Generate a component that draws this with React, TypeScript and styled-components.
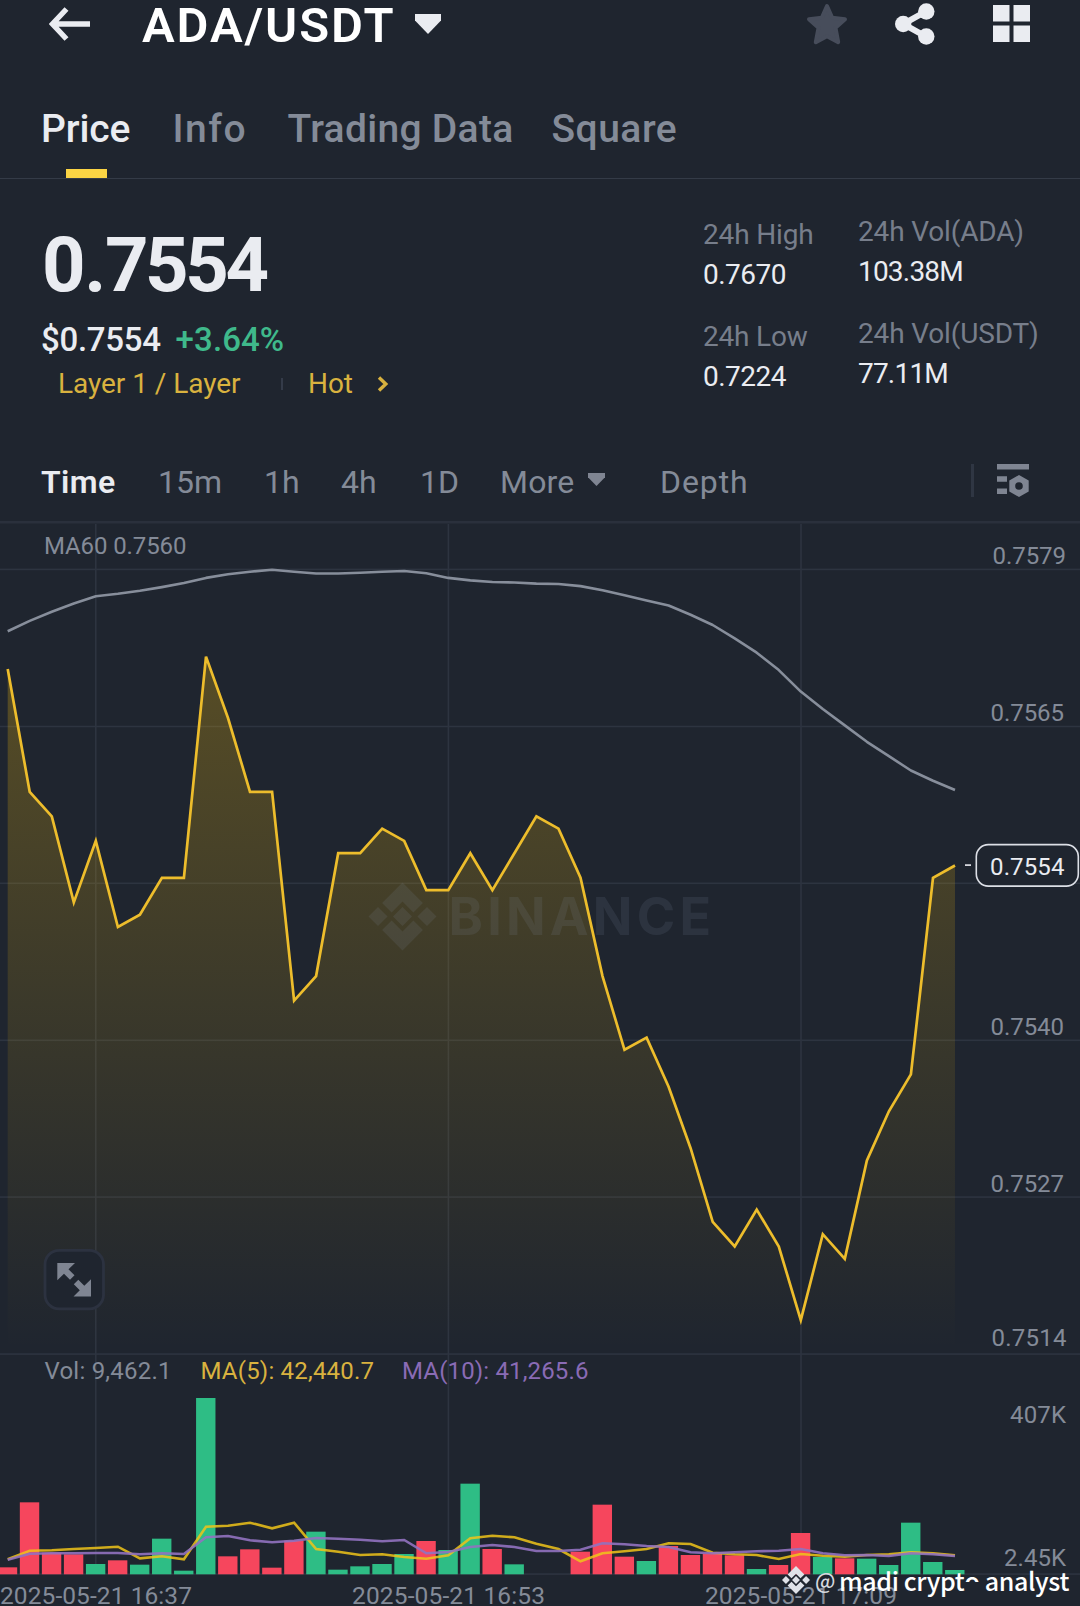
import React from 'react';
import styled, { createGlobalStyle } from 'styled-components';

const c = {
  bg: '#1f252f',
  line: '#2d3440',
  muted: '#848b98',
  dim: '#777e8b',
  light: '#eaecf1',
  yellow: '#d9b23f',
  gold: '#edbd2c',
  green: '#2ebd85',
  red: '#f6465d',
  purple: '#8a6bb5',
};

const GlobalStyle = createGlobalStyle`
  *, *::before, *::after { box-sizing: border-box; }
  body { margin: 0; background: ${c.bg}; }
  svg { display: block; flex: none; }
`;

const Page = styled.main`
  position: relative;
  display: flex;
  flex-direction: column;
  width: 1080px;
  height: 1606px;
  overflow: hidden;
  background: ${c.bg};
  color: ${c.light};
  font-family: Roboto, "Liberation Sans", sans-serif;
  white-space: nowrap;
`;

const Header = styled.header`
  display: flex;
  align-items: center;
  height: 47px;
  padding: 0 50px 0 49px;
`;

const Title = styled.h1`
  width: 273px;
  margin: 5px 0 0 51px;
  font-size: 49px;
  line-height: 52px;
  font-weight: 600;
  letter-spacing: 1.9px;
  color: #fff;
`;

const Actions = styled.div`
  display: flex;
  align-items: center;
  gap: 46.5px;
  margin-left: auto;
`;

const Tabs = styled.nav`
  display: grid;
  grid-template-columns: 131.5px 115px 264px auto;
  height: 132px;
  padding: 57px 0 0 41px;
  border-bottom: 1px solid #343b47;
`;

const Tab = styled.div<{ $active?: boolean; $ls: number }>`
  display: flex;
  flex-direction: column;
  font-size: 39px;
  line-height: 50px;
  font-weight: 500;
  letter-spacing: ${(p) => p.$ls}px;
  color: ${(p) => (p.$active ? c.light : c.muted)};
`;

const TabMark = styled.span`
  width: 41px;
  height: 9px;
  margin: 15px 0 0 25px;
  background: #fbd444;
`;

const Summary = styled.section`
  display: grid;
  grid-template-columns: 662px 155px auto;
  height: 261px;
  padding: 36px 0 0 41px;
`;

const PriceBlock = styled.div`
  display: flex;
  flex-direction: column;
  padding-top: 15px;
`;

const BigPrice = styled.div`
  padding-left: 1px;
  font-size: 76px;
  line-height: 70px;
  font-weight: 700;
  letter-spacing: -3.4px;
`;

const Point = styled.span`
  margin: 0 2px;
`;

const FiatRow = styled.div`
  display: flex;
  gap: 15px;
  margin-top: 22px;
  font-size: 33px;
  line-height: 36px;
  font-weight: 500;
  letter-spacing: -0.3px;
`;

const Change = styled.span`
  color: #3fb98b;
  letter-spacing: 0.1px;
`;

const Tags = styled.div`
  display: flex;
  align-items: center;
  height: 36px;
  margin-top: 8px;
  padding-left: 17px;
  font-size: 28px;
  line-height: 36px;
  letter-spacing: -0.05px;
  color: ${c.yellow};
`;

const TagName = styled.span<{ $w: number }>`
  width: ${(p) => p.$w}px;
`;

const TagDivider = styled.i`
  width: 2px;
  height: 12px;
  margin: 0 25px 0 -1px;
  background: #343b49;
`;

const StatColumn = styled.dl<{ $raise?: boolean }>`
  display: flex;
  flex-direction: column;
  gap: 22px;
  margin: ${(p) => (p.$raise ? '-3px' : '0')} 0 0;
`;

const Stat = styled.div`
  font-size: 28px;
  line-height: 40px;
`;

const StatLabel = styled.dt<{ $ls: number }>`
  color: ${c.dim};
  letter-spacing: ${(p) => p.$ls}px;
`;

const StatValue = styled.dd<{ $ls: number }>`
  margin: 0;
  letter-spacing: ${(p) => p.$ls}px;
`;

const Frames = styled.div`
  display: flex;
  align-items: center;
  height: 81px;
  padding: 2px 51px 0 41px;
  font-size: 32px;
  line-height: 40px;
  color: ${c.dim};
`;

const Frame = styled.span<{ $w: number; $active?: boolean; $ls?: number }>`
  width: ${(p) => p.$w}px;
  letter-spacing: ${(p) => p.$ls ?? 0}px;
  font-weight: ${(p) => (p.$active ? 600 : 400)};
  color: ${(p) => (p.$active ? c.light : c.muted)};
`;

const FrameCaret = styled.span`
  width: 72px;
  padding-bottom: 5px;
`;

const FrameTools = styled.div`
  display: flex;
  align-items: center;
  gap: 23px;
  margin: -3px 0 0 auto;
`;

const ToolDivider = styled.i`
  width: 3px;
  height: 33px;
  background: #2f3643;
`;

const Chart = styled.svg`
  font-family: Roboto, "Liberation Sans", sans-serif;
`;

const Credit = styled.div`
  position: absolute;
  left: 782px;
  top: 1562px;
  display: flex;
  align-items: center;
  height: 36px;
  font-family: "Noto Sans CJK SC", "Noto Sans", sans-serif;
  font-size: 25px;
  line-height: 36px;
  font-weight: 500;
  letter-spacing: -0.35px;
  color: #fff;
`;

const At = styled.span`
  width: 24px;
  margin-left: 5px;
  font-size: 21px;
  color: #d5d8de;
`;

const CutLetter = styled.span`
  display: inline-block;
  clip-path: inset(0 0 16px 0);
`;

const STEP = 22.03;
const X0 = 7.7;
const TOP = 521;
const px = (i: number) => X0 + i * STEP;

const priceTicks = [
  -16, -6, -4, 3, -2, 5, 4, 1, 1, -17, -12, -6, -6, 11, 9, -1, -1, -3, -2, 2, 2, -1, 2, -1, -4, -3, 1, 9,
  15, 14, 18, 23, 29, 31, 28, 31, 37, 30, 32, 24, 20, 17, 1, 0,
];
const priceY = priceTicks.map((k) => 865.5 + 12.29 * k);

const ma60 = [
  616, 606, 597, 589, 582, 579.5, 576.5, 573, 569, 564, 560.5, 558, 556, 558, 559.7, 559.7, 559, 558, 557.3,
  559.5, 564, 566.5, 568, 568.5, 569.6, 570, 572, 576, 581, 586, 591, 600, 610, 623, 637, 654, 675, 692, 708,
  724, 738, 752, 762, 771,
].map((v) => v * 1.0246);

const volumes: Array<[number, 'r' | 'g'] | null> = [
  [682, 'r'], [487, 'r'], [638, 'r'], [643, 'r'], [672, 'g'], [661, 'r'], [674, 'g'], [596, 'g'], [692, 'g'],
  [174, 'g'], [649, 'r'], [628, 'r'], [683, 'r'], [602, 'r'], [575, 'g'], [689, 'g'], [679, 'g'], [672, 'g'],
  [642, 'g'], [603, 'r'], [630, 'g'], [431, 'g'], [627, 'r'], [673, 'g'], null, null, [635, 'r'], [494, 'r'],
  [650, 'r'], [663, 'g'], [618, 'r'], [645, 'r'], [641, 'r'], [646, 'r'], [687, 'g'], [675, 'r'], [579, 'r'],
  [651, 'g'], [655, 'r'], [656, 'g'], [675, 'g'], [548, 'g'], [666, 'g'], [690, 'g'],
];

const volY = (v: number) => 1340 + v / 3;

const ma5 = [
  658, 632, 631, 627, 624, 620, 655, 649, 658, 560, 557, 548, 565, 548, 627, 635, 645, 643, 651, 656, 646, 595,
  587, 592, 611, 627, 664, 640, 634, 627, 610, 612, 638, 643, 645, 657, 642, 647, 650, 645, 643, 637, 640, 646,
].map(volY);

const ma10 = [
  659, 641, 640, 640, 639, 639, 643, 640, 642, 592, 588, 601, 607, 602, 594, 596, 599, 604, 600, 640, 636, 621,
  615, 621, 633, 633, 629, 610, 613, 618, 621, 637, 640, 637, 634, 632, 627, 640, 646, 645, 648, 640, 643, 648,
].map(volY);

const toPoints = (ys: number[]) => ys.map((y, i) => `${px(i).toFixed(1)},${y.toFixed(1)}`).join(' ');

const axis: Array<[string, number, number, number]> = [
  ['0.7579', 564.3, 992.5, 73.5],
  ['0.7565', 721, 990.5, 73.5],
  ['0.7540', 1035.2, 990.5, 73.5],
  ['0.7527', 1192, 990.5, 73.5],
  ['0.7514', 1346.2, 991.5, 75],
  ['407K', 1423, 1010, 56],
  ['2.45K', 1566, 1004, 62],
];

const BinanceMark = () => (
  <>
    <path d="M63 25 93 55 79 69 63 53 47 69 33 55Z" transform="translate(-13 -25)" />
    <path d="M50 126 20 96 34 82 50 98 66 82 80 96Z" transform="translate(0 -26)" />
    <path d="M50 36 64 50 50 64 36 50Z" />
    <path d="M14 36 28 50 14 64 0 50Z" />
    <path d="M86 36 100 50 86 64 72 50Z" />
  </>
);

const Caret = ({ w, h, color }: { w: number; h: number; color: string }) => (
  <svg width={w} height={h} viewBox="0 0 26 20" preserveAspectRatio="none">
    <path d="M0 0H26V6.5L13 20 0 6.5Z" fill={color} />
  </svg>
);

const PriceChart = () => (
  <Chart width="1080" height="1085" viewBox={`0 ${TOP} 1080 1085`}>
    <defs>
      <linearGradient id="area" gradientUnits="userSpaceOnUse" x1="0" y1="656" x2="0" y2="1350">
        <stop offset="0" stopColor="#f0b90b" stopOpacity="0.27" />
        <stop offset="1" stopColor="#f0b90b" stopOpacity="0" />
      </linearGradient>
    </defs>
    <rect x="0" y="521" width="1080" height="2.5" fill="#2a303c" />
    <g fill={c.line}>
      {[568.6, 725.7, 882.5, 1039.5, 1196.3, 1353.3, 1573.3].map((y) => (
        <rect key={y} x="0" y={y} width="1080" height="1.6" />
      ))}
      {[95, 447.6, 800.2].map((x) => (
        <rect key={x} x={x} y="524" width="1.6" height="1050" />
      ))}
    </g>

    <polygon points={`${px(0)},1354 ${toPoints(priceY)} ${px(43)},1354`} fill="url(#area)" />
    <g fill="#8b9ab5" opacity="0.12">
      <g transform="translate(368.5 882.5) scale(0.68)">
        <BinanceMark />
      </g>
      <text x="448.5" y="935" fontFamily="Inter, sans-serif" fontWeight="700" fontSize="52" textLength="262.5">
        BINANCE
      </text>
    </g>
    <polyline points={toPoints(ma60)} fill="none" stroke="#878e9b" strokeWidth="2.6" strokeLinejoin="round" />
    <polyline points={toPoints(priceY)} fill="none" stroke={c.gold} strokeWidth="2.7" />

    <text x="44" y="554" fontSize="24" fill={c.muted} textLength="142.5">MA60 0.7560</text>
    {axis.map(([label, y, x, len]) => (
      <text key={label} x={x} y={y} fontSize="24" fill={c.muted} textLength={len}>
        {label}
      </text>
    ))}

    <rect x="965" y="864.3" width="6" height="1.6" fill={c.light} />
    <rect x="976.3" y="844.6" width="102" height="41.5" rx="12" fill={c.bg} stroke="#dcdfe6" strokeWidth="1.6" />
    <text x="990" y="875" fontSize="24" fill={c.light} textLength="74.5">0.7554</text>

    <rect x="45" y="1250.3" width="58.5" height="58.5" rx="14" fill={c.bg} stroke="#2c3240" strokeWidth="2.8" />
    <g fill="#7f8592">
      <path d="M57.3 1263H75L68.5 1269.3 74.5 1275.3 70 1279.8 64 1273.8 57.3 1280.3Z" />
      <path d="M91 1296.5H73.5L79.8 1290.2 73.8 1284.2 78.3 1279.7 84.3 1285.7 91 1279.2Z" />
    </g>

    <text x="44.5" y="1379.3" fontSize="24" fill={c.muted} textLength="127">Vol: 9,462.1</text>
    <text x="200.5" y="1379.3" fontSize="24" fill={c.yellow} textLength="173.5">MA(5): 42,440.7</text>
    <text x="402" y="1379.3" fontSize="24" fill={c.purple} textLength="186.5">MA(10): 41,265.6</text>

    {volumes.map((v, i) =>
      v ? (
        <rect
          key={i}
          x={px(i) - 9.9}
          y={volY(v[0])}
          width="19.4"
          height={1574.3 - volY(v[0])}
          fill={v[1] === 'g' ? c.green : c.red}
        />
      ) : null,
    )}
    <polyline points={toPoints(ma5)} fill="none" stroke="#f0c419" strokeOpacity="0.85" strokeWidth="2.6" />
    <polyline points={toPoints(ma10)} fill="none" stroke="#9172c0" strokeOpacity="0.9" strokeWidth="2.6" />

    <text x="0" y="1604.3" fontSize="24.5" fill={c.muted} textLength="192">2025-05-21 16:37</text>
    <text x="352" y="1604.3" fontSize="24.5" fill={c.muted} textLength="193">2025-05-21 16:53</text>
    <text x="705" y="1604.3" fontSize="24.5" fill={c.muted} textLength="192">2025-05-21 17:09</text>
  </Chart>
);

export default function App() {
  return (
    <Page>
      <GlobalStyle />
      <Header>
        <svg width="42" height="34" viewBox="0 0 42 34" fill="none" stroke={c.light} strokeWidth="5.4">
          <path d="M41 17H4M17.5 2 3.5 17 17.5 32" />
        </svg>
        <Title>ADA/USDT</Title>
        <Caret w={26} h={20} color={c.light} />
        <Actions>
          <svg width="42" height="42" viewBox="0 0 42 42">
            <path
              d="M21 3 26.2 14.8 39 16.2 29.5 24.8 32.2 39.2 21 33.3 9.8 39.2 12.5 24.8 3 16.2 15.8 14.8Z"
              fill="#474d5b"
              stroke="#474d5b"
              strokeWidth="4"
              strokeLinejoin="round"
            />
          </svg>
          <svg width="40" height="42" viewBox="0 0 40 42" fill={c.light} stroke={c.light}>
            <path d="M31.5 8.2 8.2 21 31.5 33.8" fill="none" strokeWidth="6" />
            <g stroke="none">
              <circle cx="8.2" cy="21" r="8.2" />
              <circle cx="31.3" cy="8.5" r="8.2" />
              <circle cx="31.3" cy="33.5" r="8.2" />
            </g>
          </svg>
          <svg width="49" height="37" viewBox="0 0 49 37" fill={c.light}>
            <path d="M12 0H28.5V16.5H12ZM32.5 0H49V16.5H32.5ZM12 20.5H28.5V37H12ZM32.5 20.5H49V37H32.5Z" />
          </svg>
        </Actions>
      </Header>

      <Tabs>
        <Tab $active $ls={-0.1}>
          Price
          <TabMark />
        </Tab>
        <Tab $ls={1.5}>Info</Tab>
        <Tab $ls={0.3}>Trading Data</Tab>
        <Tab $ls={0.5}>Square</Tab>
      </Tabs>

      <Summary>
        <PriceBlock>
          <BigPrice>
            0<Point>.</Point>7554
          </BigPrice>
          <FiatRow>
            $0.7554
            <Change>+3.64%</Change>
          </FiatRow>
          <Tags>
            <TagName $w={224}>Layer 1 / Layer</TagName>
            <TagDivider />
            <TagName $w={69}>Hot</TagName>
            <svg width="12" height="16" viewBox="0 0 12 16" fill="none" stroke={c.yellow} strokeWidth="3.4">
              <path d="M2 1.5 8.8 8 2 14.5" />
            </svg>
          </Tags>
        </PriceBlock>
        <StatColumn>
          <Stat>
            <StatLabel $ls={-0.15}>24h High</StatLabel>
            <StatValue $ls={-0.5}>0.7670</StatValue>
          </Stat>
          <Stat>
            <StatLabel $ls={-0.2}>24h Low</StatLabel>
            <StatValue $ls={-0.5}>0.7224</StatValue>
          </Stat>
        </StatColumn>
        <StatColumn $raise>
          <Stat>
            <StatLabel $ls={-0.15}>24h Vol(ADA)</StatLabel>
            <StatValue $ls={-0.8}>103.38M</StatValue>
          </Stat>
          <Stat>
            <StatLabel $ls={-0.15}>24h Vol(USDT)</StatLabel>
            <StatValue $ls={-0.8}>77.11M</StatValue>
          </Stat>
        </StatColumn>
      </Summary>

      <Frames>
        <Frame $w={117} $ls={0.4} $active>Time</Frame>
        <Frame $w={106}>15m</Frame>
        <Frame $w={77}>1h</Frame>
        <Frame $w={79}>4h</Frame>
        <Frame $w={80}>1D</Frame>
        <Frame $w={88} $ls={0.2}>More</Frame>
        <FrameCaret>
          <Caret w={17} h={13} color="#7f8592" />
        </FrameCaret>
        <Frame $w={100} $ls={0.9}>Depth</Frame>
        <FrameTools>
          <ToolDivider />
          <svg width="32" height="33" viewBox="0 0 32 33" fill="#7f8592">
            <path d="M0 0H32V5.5H0ZM0 12.3H10V17.8H0ZM0 24.5H10V30H0Z" />
            <path
              fillRule="evenodd"
              d="M22 11 31.7 16.5V27.5L22 33 12.3 27.5V16.5ZM22 18.2A3.8 3.8 0 1 0 22 25.8 3.8 3.8 0 1 0 22 18.2Z"
            />
          </svg>
        </FrameTools>
      </Frames>

      <PriceChart />

      <Credit>
        <svg width="28" height="28" viewBox="0 0 100 100" fill="#dfe2e8">
          <BinanceMark />
        </svg>
        <At>@</At>
        <span>
          madi crypt<CutLetter>o</CutLetter> analyst
        </span>
      </Credit>
    </Page>
  );
}
